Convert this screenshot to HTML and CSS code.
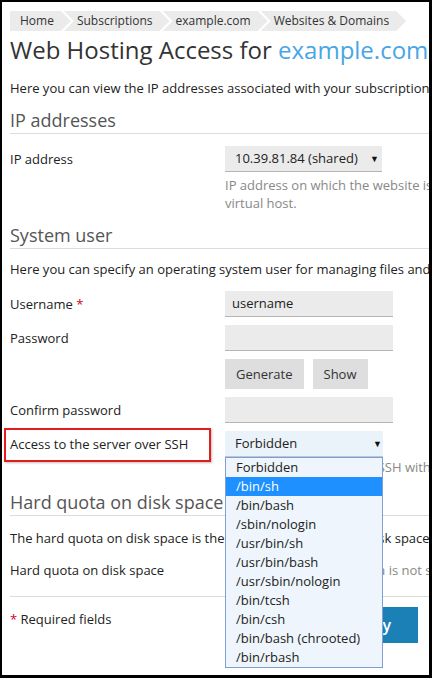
FILE: index.html
```html
<!DOCTYPE html>
<html lang="en">
<head>
<meta charset="utf-8">
<title>Web Hosting Access</title>
<link rel="stylesheet" href="styles.css">
</head>
<body>
<div class="frame">
  <div class="page">
    <nav class="crumbs">
      <span class="crumb">Home</span>
      <span class="crumb">Subscriptions</span>
      <span class="crumb">example.com</span>
      <span class="crumb">Websites &amp; Domains</span>
    </nav>

    <h1 class="title">Web Hosting Access for <span class="domain">example.com</span></h1>

    <p class="intro">Here you can view the IP addresses associated with your subscription.</p>

    <h2 class="section-title">IP addresses</h2>
    <div class="row row-first">
      <div class="label">IP address</div>
      <div class="field">
        <div class="select">10.39.81.84 (shared)<span class="arrow">▼</span></div>
        <div class="hint">IP address on which the website is hosted as a<br>virtual host.</div>
      </div>
    </div>

    <h2 class="section-title">System user</h2>
    <p class="intro">Here you can specify an operating system user for managing files and folders.</p>

    <div class="row row-after-text">
      <div class="label">Username <span class="req">*</span></div>
      <div class="field"><div class="input">username</div></div>
    </div>
    <div class="row">
      <div class="label">Password</div>
      <div class="field"><div class="input"></div></div>
    </div>
    <div class="row">
      <div class="label"></div>
      <div class="field buttons">
        <span class="btn">Generate</span>
        <span class="btn">Show</span>
      </div>
    </div>
    <div class="row">
      <div class="label">Confirm password</div>
      <div class="field"><div class="input"></div></div>
    </div>
    <div class="row">
      <div class="label"><span class="marked">Access to the server over SSH</span></div>
      <div class="field">
        <div class="select-wrap">
          <div class="select select-open">Forbidden<span class="arrow">▼</span></div>
          <ul class="dropdown">
            <li>Forbidden</li>
            <li class="active">/bin/sh</li>
            <li>/bin/bash</li>
            <li>/sbin/nologin</li>
            <li>/usr/bin/sh</li>
            <li>/usr/bin/bash</li>
            <li>/usr/sbin/nologin</li>
            <li>/bin/tcsh</li>
            <li>/bin/csh</li>
            <li>/bin/bash (chrooted)</li>
            <li>/bin/rbash</li>
          </ul>
        </div>
        <div class="hint hint-ssh">Gives the user access via SSH with the selected shell.</div>
      </div>
    </div>

    <h2 class="section-title section-quota">Hard quota on disk space</h2>
    <p class="intro intro-quota">The hard quota on disk space is the maximum quantity for disk space that can be used.</p>
    <div class="row row-quota">
      <div class="label">Hard quota on disk space</div>
      <div class="field"><div class="value">Use of the hard disk quota is not supported.</div></div>
    </div>

    <div class="footer">
      <div class="label"><span class="req">*</span> Required fields</div>
      <div class="field field-actions"><span class="btn-primary">Apply</span></div>
    </div>
  </div>
</div>
</body>
</html>
```

FILE: styles.css
```css
html, body {
  margin: 0;
  padding: 0;
  background: #fff;
}

body {
  font-family: "Open Sans", "Noto Sans", sans-serif;
  font-size: 13px;
  color: #333;
}

.frame {
  width: 432px;
  height: 678px;
  box-sizing: border-box;
  border-style: solid;
  border-color: #000;
  border-width: 2px 3px 3px 2px;
  overflow: hidden;
  padding: 9px 0 0 8px;
  background: #fff;
}

.page {
  width: 640px;
}

/* breadcrumbs */
.crumbs {
  display: flex;
  height: 20px;
  line-height: 20px;
  font-size: 12px;
}

.crumb {
  background: #ebebeb;
  color: #333;
  padding: 0 17px 0 13px;
  margin-left: -7px;
  clip-path: polygon(0 0, calc(100% - 10px) 0, 100% 50%, calc(100% - 10px) 100%, 0 100%, 10px 50%);
}

.crumb:first-child {
  margin-left: 0;
  padding-left: 10px;
  clip-path: polygon(0 0, calc(100% - 10px) 0, 100% 50%, calc(100% - 10px) 100%, 0 100%);
}

/* title */
.title {
  margin: 4px 0 0;
  font-size: 24px;
  line-height: 30px;
  font-weight: normal;
  color: #333;
  white-space: nowrap;
}

.domain {
  color: #48a6e6;
}

.intro {
  margin: 14px 0 0;
  line-height: 18px;
  white-space: nowrap;
  color: #222;
}

.section-title {
  margin: 11px 0 0;
  font-size: 18px;
  line-height: 24px;
  font-weight: normal;
  color: #555;
  padding-bottom: 1px;
  border-bottom: 1px solid #dcdcdc;
}

.section-title + .intro {
  margin-top: 11px;
}

/* form rows */
.row {
  display: grid;
  grid-template-columns: 215px 1fr;
  margin-top: 8px;
}

.row-first {
  margin-top: 12px;
}

.row-after-text {
  margin-top: 13px;
}

.label {
  line-height: 26px;
  color: #222;
}

.req {
  color: #d0021b;
}

.field {
  display: flex;
  flex-direction: column;
  align-items: flex-start;
}

.select {
  box-sizing: border-box;
  width: 157px;
  height: 26px;
  line-height: 25px;
  padding: 0 0 0 10px;
  background: #ebebeb;
  border-bottom: 1px solid #b4b4b4;
  color: #222;
  display: flex;
  justify-content: space-between;
}

.arrow {
  font-size: 9px;
  width: 12px;
  color: #111;
}

.hint {
  margin-top: 4px;
  line-height: 18px;
  color: #888;
  white-space: nowrap;
}

.input {
  box-sizing: border-box;
  width: 168px;
  height: 26px;
  line-height: 25px;
  padding: 0 7px;
  background: #ebebeb;
  border-bottom: 1px solid #b4b4b4;
  color: #222;
}

.buttons {
  flex-direction: row;
  gap: 9px;
}

.btn {
  height: 30px;
  line-height: 30px;
  padding: 0 11px;
  background: #dedede;
  color: #333;
}

/* ssh */
.marked {
  position: relative;
}

.marked::before {
  content: "";
  position: absolute;
  left: -6px;
  top: -7px;
  width: 203px;
  height: 30px;
  border: 2px solid #e31c1c;
  box-shadow: 1px 1px 2px rgba(0, 0, 0, 0.25);
}

.select-wrap {
  position: relative;
}

.select-open {
  width: 158px;
  background: #eaf3fa;
  border-bottom-color: #b9c6d3;
}

.select-open .arrow {
  width: 10px;
}

.dropdown {
  position: absolute;
  left: 0;
  top: 26px;
  z-index: 2;
  width: 158px;
  box-sizing: border-box;
  margin: 0;
  padding: 0;
  list-style: none;
  background: #eef5fc;
  border: 1px solid #7f9fd3;
}

.dropdown li {
  line-height: 19px;
  padding-left: 10px;
  color: #222;
}

.dropdown li.active {
  background: #1e90ff;
  color: #fff;
}

.hint-ssh {
  margin-top: 1px;
}

.section-quota {
  margin-top: 14px;
}

.intro-quota {
  margin-top: 13px;
}

.section-title + .intro-quota {
  margin-top: 13px;
}

.row-quota {
  margin-top: 10px;
}

.value {
  line-height: 26px;
  color: #888;
  white-space: nowrap;
}

/* footer */
.footer {
  display: grid;
  grid-template-columns: 215px 1fr;
  margin-top: 13px;
  padding-top: 10px;
  border-top: 1px solid #dcdcdc;
}

.footer .label {
  line-height: 18px;
  padding-top: 3px;
}

.field-actions {
  width: 193px;
  align-items: flex-end;
}

.btn-primary {
  height: 36px;
  line-height: 36px;
  padding: 0 27px 0 24px;
  background: #1a80b6;
  color: #fff;
  font-weight: 600;
  font-size: 16px;
}
```
